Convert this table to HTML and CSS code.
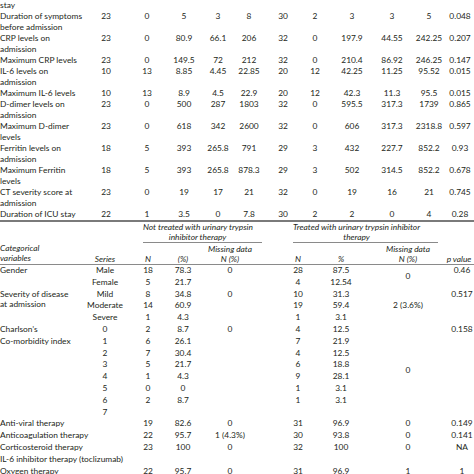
FILE: index.html
```html
<!DOCTYPE html>
<html>
<head>
<meta charset="utf-8">
<link rel="stylesheet" href="styles.css">
</head>
<body>
<div class="page">
  <div class="stay">stay</div>
  <div class="top">
    <div class="rl">Duration of symptoms<br>before admission</div><div>23</div><div>0</div><div>5</div><div>3</div><div>8</div><div>30</div><div>2</div><div>3</div><div>3</div><div>5</div><div>0.048</div>
    <div class="rl">CRP levels on<br>admission</div><div>23</div><div>0</div><div>80.9</div><div>66.1</div><div>206</div><div>32</div><div>0</div><div>197.9</div><div>44.55</div><div>242.25</div><div>0.207</div>
    <div class="rl">Maximum CRP levels</div><div>23</div><div>0</div><div>149.5</div><div>72</div><div>212</div><div>32</div><div>0</div><div>210.4</div><div>86.92</div><div>246.25</div><div>0.147</div>
    <div class="rl">IL-6 levels on<br>admission</div><div>10</div><div>13</div><div>8.85</div><div>4.45</div><div>22.85</div><div>20</div><div>12</div><div>42.25</div><div>11.25</div><div>95.52</div><div>0.015</div>
    <div class="rl">Maximum IL-6 levels</div><div>10</div><div>13</div><div>8.9</div><div>4.5</div><div>22.9</div><div>20</div><div>12</div><div>42.3</div><div>11.3</div><div>95.5</div><div>0.015</div>
    <div class="rl">D-dimer levels on<br>admission</div><div>23</div><div>0</div><div>500</div><div>287</div><div>1803</div><div>32</div><div>0</div><div>595.5</div><div>317.3</div><div>1739</div><div>0.865</div>
    <div class="rl">Maximum D-dimer<br>levels</div><div>23</div><div>0</div><div>618</div><div>342</div><div>2600</div><div>32</div><div>0</div><div>606</div><div>317.3</div><div>2318.8</div><div>0.597</div>
    <div class="rl">Ferritin levels on<br>admission</div><div>18</div><div>5</div><div>393</div><div>265.8</div><div>791</div><div>29</div><div>3</div><div>432</div><div>227.7</div><div>852.2</div><div>0.93</div>
    <div class="rl">Maximum Ferritin<br>levels</div><div>18</div><div>5</div><div>393</div><div>265.8</div><div>878.3</div><div>29</div><div>3</div><div>502</div><div>314.5</div><div>852.2</div><div>0.678</div>
    <div class="rl">CT severity score at<br>admission</div><div>23</div><div>0</div><div>19</div><div>17</div><div>21</div><div>32</div><div>0</div><div>19</div><div>16</div><div>21</div><div>0.745</div>
    <div class="rl">Duration of ICU stay</div><div>22</div><div>1</div><div>3.5</div><div>0</div><div>7.8</div><div>30</div><div>2</div><div>2</div><div>0</div><div>4</div><div>0.28</div>
  </div>

  <div class="hdr">
    <div class="g1">Not treated with urinary trypsin<br>inhibitor therapy</div>
    <div class="g2">Treated with urinary trypsin inhibitor<br>therapy</div>
    <div class="hl">Categorical<br>variables</div>
    <div class="h ser">Series</div>
    <div class="h n1">N</div>
    <div class="h p1">(%)</div>
    <div class="h m1">Missing data<br>N (%)</div>
    <div class="h n2">N</div>
    <div class="h p2">%</div>
    <div class="h m2">Missing data<br>N (%)</div>
    <div class="h pv pvh">p value</div>
  </div>

  <div class="body">
    <div class="cell m2 sp-gender">0</div>
    <div class="cell m2 sp-sev">2 (3.6%)</div>
    <div class="cell m2 sp-cci">0</div>

    <div class="cell lab">Gender</div><div class="cell ser">Male</div><div class="cell n1">18</div><div class="cell p1">78.3</div><div class="cell m1">0</div><div class="cell n2">28</div><div class="cell p2">87.5</div><div class="cell pv">0.46</div>
    <div class="cell ser">Female</div><div class="cell n1">5</div><div class="cell p1">21.7</div><div class="cell n2">4</div><div class="cell p2">12.54</div>

    <div class="cell lab two">Severity of disease<br>at admission</div><div class="cell ser">Mild</div><div class="cell n1">8</div><div class="cell p1">34.8</div><div class="cell m1">0</div><div class="cell n2">10</div><div class="cell p2">31.3</div><div class="cell pv">0.517</div>
    <div class="cell ser">Moderate</div><div class="cell n1">14</div><div class="cell p1">60.9</div><div class="cell n2">19</div><div class="cell p2">59.4</div>
    <div class="cell ser">Severe</div><div class="cell n1">1</div><div class="cell p1">4.3</div><div class="cell n2">1</div><div class="cell p2">3.1</div>

    <div class="cell lab">Charlson’s</div><div class="cell ser">0</div><div class="cell n1">2</div><div class="cell p1">8.7</div><div class="cell m1">0</div><div class="cell n2">4</div><div class="cell p2">12.5</div><div class="cell pv">0.158</div>
    <div class="cell lab">Co-morbidity index</div><div class="cell ser">1</div><div class="cell n1">6</div><div class="cell p1">26.1</div><div class="cell n2">7</div><div class="cell p2">21.9</div>
    <div class="cell ser">2</div><div class="cell n1">7</div><div class="cell p1">30.4</div><div class="cell n2">4</div><div class="cell p2">12.5</div>
    <div class="cell ser">3</div><div class="cell n1">5</div><div class="cell p1">21.7</div><div class="cell n2">6</div><div class="cell p2">18.8</div>
    <div class="cell ser">4</div><div class="cell n1">1</div><div class="cell p1">4.3</div><div class="cell n2">9</div><div class="cell p2">28.1</div>
    <div class="cell ser">5</div><div class="cell n1">0</div><div class="cell p1">0</div><div class="cell n2">1</div><div class="cell p2">3.1</div>
    <div class="cell ser">6</div><div class="cell n1">2</div><div class="cell p1">8.7</div><div class="cell n2">1</div><div class="cell p2">3.1</div>
    <div class="cell ser">7</div>

    <div class="cell wide">Anti-viral therapy</div><div class="cell n1">19</div><div class="cell p1">82.6</div><div class="cell m1">0</div><div class="cell n2">31</div><div class="cell p2">96.9</div><div class="cell m2">0</div><div class="cell pv">0.149</div>
    <div class="cell wide">Anticoagulation therapy</div><div class="cell n1">22</div><div class="cell p1">95.7</div><div class="cell m1">1 (4.3%)</div><div class="cell n2">30</div><div class="cell p2">93.8</div><div class="cell m2">0</div><div class="cell pv">0.141</div>
    <div class="cell wide">Corticosteroid therapy</div><div class="cell n1">23</div><div class="cell p1">100</div><div class="cell m1">0</div><div class="cell n2">32</div><div class="cell p2">100</div><div class="cell m2">0</div><div class="cell pv">NA</div>
    <div class="cell wide">IL-6 inhibitor therapy (toclizumab)</div>
    <div class="cell wide">Oxygen therapy</div><div class="cell n1">22</div><div class="cell p1">95.7</div><div class="cell m1">0</div><div class="cell n2">31</div><div class="cell p2">96.9</div><div class="cell m2">1</div><div class="cell pv">1</div>
  </div>
</div>
</body>
</html>
```

FILE: styles.css
```css
html, body {
  margin: 0;
  padding: 0;
  background: #ffffff;
}
body {
  font-family: Lato, "Open Sans", sans-serif;
  font-size: 8.4px;
  color: #231f20;
  overflow: hidden;
}
.page {
  width: 474px;
}
.stay {
  line-height: 11px;
  height: 11px;
}
.top {
  display: grid;
  grid-template-columns: 86px 40px 42px 32px 36px 26px 42px 22px 52px 28px 46px 16px;
  line-height: 11px;
  align-items: start;
}
.top > div {
  display: flex;
  justify-content: center;
  white-space: nowrap;
}
.top > .rl {
  display: block;
}

.hdr,
.body {
  display: grid;
  grid-template-columns:
    [lab] 87px [ser] 36px [sp1] 10px [n1] 30px [sp2] 5px [p1] 30px [sp3] 7px
    [m1] 50px [sp4] 28px [n2] 30px [sp5] 13px [p2] 30px [sp6] 24px
    [m2] 56px [sp7] 9px [pv] 34px [end];
}
.hdr {
  border-top: 2px solid #7a7a7a;
  border-bottom: 1px solid #8a8a8a;
  font-style: italic;
  line-height: 10px;
  grid-template-rows: 21px 21px;
}
.g1, .g2 {
  grid-row: 1;
  height: 20px;
  border-bottom: 1px solid #8a8a8a;
  text-align: center;
  white-space: nowrap;
}
.g1 {
  grid-column: n1 / n2;
  margin: 0 21px 0 10px;
  padding-right: 10px;
}
.g2 {
  grid-column: n2 / pv;
  margin: 0 7px 0 10px;
  padding-right: 18px;
}
.hl {
  grid-column: lab / ser;
  grid-row: 2;
  align-self: start;
}
.hdr .h {
  grid-row: 2;
  align-self: end;
  text-align: center;
  white-space: nowrap;
  display: flex;
  justify-content: center;
}
.hdr .pvh {
  padding-right: 6px;
}

.body {
  grid-auto-rows: 11.8px;
  line-height: 11.8px;
}
.cell {
  display: flex;
  justify-content: center;
  white-space: nowrap;
}
.lab { grid-column: lab / ser; justify-content: flex-start; }
.wide { grid-column: lab / n1; justify-content: flex-start; }
.ser { grid-column: ser / sp1; }
.n1 { grid-column: n1 / sp2; }
.p1 { grid-column: p1 / sp3; }
.m1 { grid-column: m1 / sp4; }
.n2 { grid-column: n2 / sp5; }
.p2 { grid-column: p2 / sp6; }
.m2 { grid-column: m2 / sp7; }
.pv { grid-column: pv / end; }
.two {
  display: block;
  line-height: 10px;
}
.sp-gender { grid-row: 1 / span 2; align-items: center; }
.sp-sev { grid-row: 3 / span 3; align-items: center; }
.sp-cci { grid-row: 6 / span 8; align-items: center; }
```
